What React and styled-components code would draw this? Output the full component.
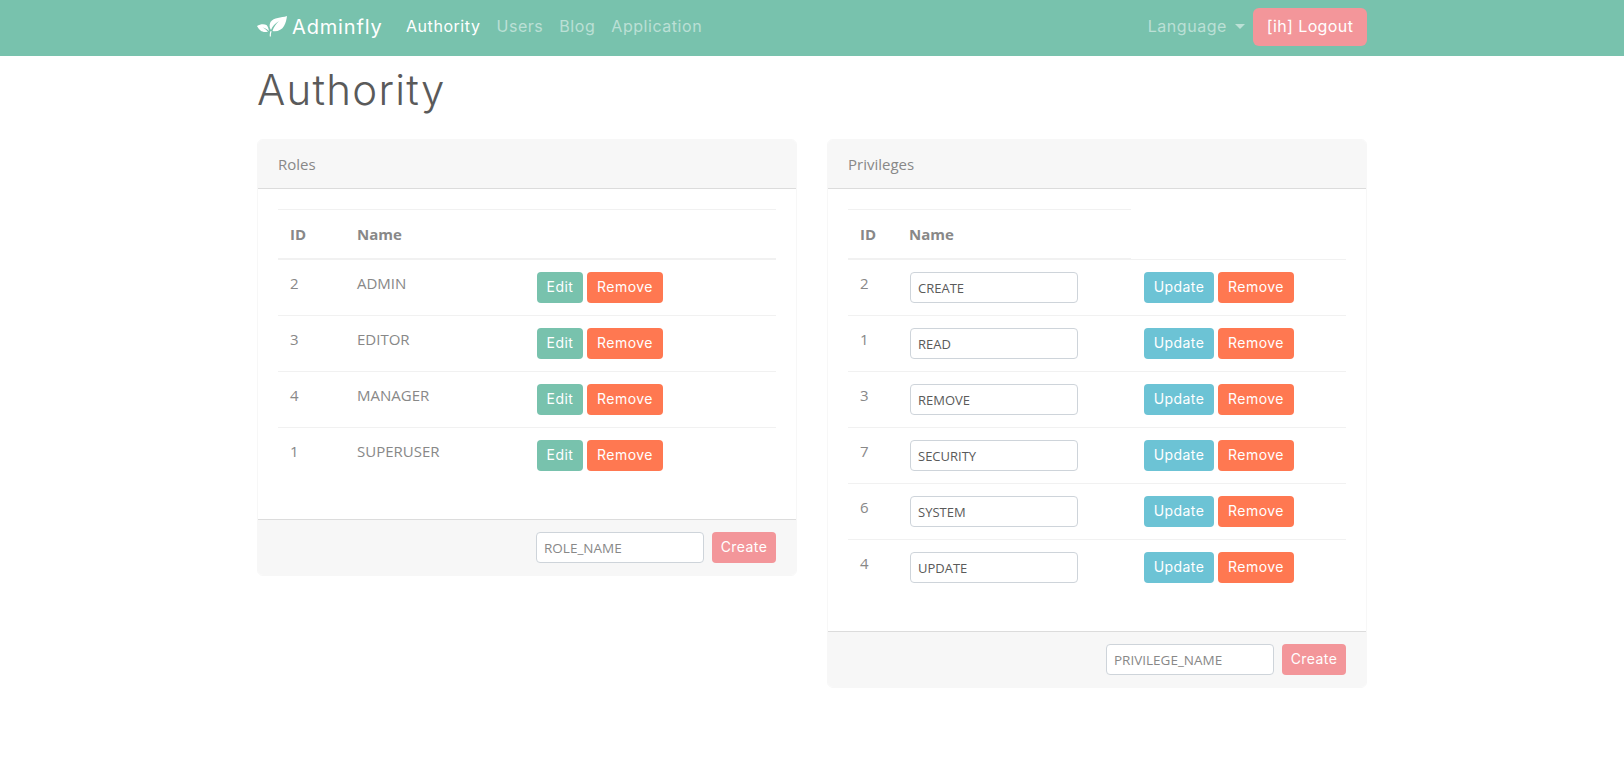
import React from "react";
import styled, { createGlobalStyle } from "styled-components";

const Global = createGlobalStyle`
  * { box-sizing: border-box; }
  html, body { margin: 0; background: #fff; }
  body { font-family: "Open Sans", "Noto Sans", sans-serif; font-size: 15px; line-height: 21px; color: #888; }
`;
const heading = `"Inter", "Liberation Sans", sans-serif`;

const Navbar = styled.nav`height: 56px; background: #78c2ad;`;
const Container = styled.div`width: 1110px; margin: 0 auto;`;
const NavInner = styled(Container)`display: flex; align-items: center; height: 100%; padding-bottom: 3px;`;
const Brand = styled.a`display: flex; align-items: center; gap: 5px; width: 149px; color: #fff; font: 400 20px/30px ${heading}; letter-spacing: .85px;`;
const NavLink = styled.a`
  font: 400 16px/22px ${heading}; letter-spacing: .55px; padding-bottom: 2px;
  color: ${p => (p.$active ? "#fff" : "rgba(255,255,255,.5)")};
  margin-right: ${p => (p.$last ? 0 : 16)}px;
`;
const Spacer = styled.div`flex: 1;`;
const Caret = styled.span`
  display: inline-block; margin-left: 8px; vertical-align: 3px;
  border-top: 5px solid currentColor; border-left: 5px solid transparent; border-right: 5px solid transparent;
`;
const LogoutButton = styled.button`
  height: 38px; width: 114px; border: 0; border-radius: 6px; background: #f3969a; color: #fff;
  font: 400 16px/24px ${heading}; letter-spacing: .4px; padding: 0 0 2px; margin-left: 8px;
`;
const Title = styled.h1`font: 300 42px/50px ${heading}; letter-spacing: 1.25px; color: #5a5a5a; margin: 9px 0 24px; `;
const Columns = styled.div`display: grid; grid-template-columns: 540px 540px; gap: 30px; align-items: start;`;
const Card = styled.section`border: 1px solid #f7f7f7; border-radius: 6px; background: #fff; overflow: hidden;`;
const CardHeader = styled.header`height: 49px; padding: 14px 20px; background: #f7f7f7; border-bottom: 1px solid #dcdcdc;`;
const CardBody = styled.div`padding: 20px;`;
const CardFooter = styled.footer`
  height: 56px; background: #f7f7f7; border-top: 1px solid #dcdcdc; padding: 12px 20px;
  display: flex; justify-content: flex-end; gap: 8px;
`;
const Table = styled.div`margin-bottom: 15px;`;
const HeadRow = styled.div`
  display: grid; grid-template-columns: ${p => p.$cols}; width: ${p => p.$width || "100%"};
  height: 51px; padding: 14px 0 0 12px;
  border-top: 1px solid #f1f1f1; border-bottom: 2px solid #f1f1f1;
  font-weight: 700;
`;
const Row = styled.div`
  display: grid; grid-template-columns: ${p => p.$cols}; height: 56px; padding: 12px 0 0 12px;
  border-bottom: 1px solid #f1f1f1;
  box-shadow: 0 -1px 0 #f1f1f1;
  &:last-child { border-bottom: 0; }
`;
const Cell = styled.div`margin-top: 1px;`;
const Actions = styled.div`display: flex; gap: 4px;`;
const Button = styled.button`
  height: 31px; padding: 0 0 2px; border: 0; border-radius: 4px; width: ${p => p.$w}px;
  background: ${p => p.$bg}; color: #fff; font: 400 14px/21px ${heading}; letter-spacing: .45px;
`;
const Input = styled.input`
  width: 168px; height: 31px; padding: 0 7px; border: 1px solid #ced4da; border-radius: 4px;
  background: #fff; color: #5a5a5a; font: 400 13px/20px "Open Sans", sans-serif; outline: 0;
  &::placeholder { color: #888; opacity: 1; font-size: 13.5px; }
`;

const Leaf = () => (
  <svg width="30" height="21" viewBox="0 0 30 21" fill="#fff" aria-hidden="true">
    <path d="M30 0C24 2 17 1 13.500 6 12 9 12.500 12 14 14 15.500 10 18 7.500 22 5 19 8 16.500 11 15.500 15 20 16 25 14 27 10 29 7 29.500 3 30 0z" />
    <path d="M0 10C3 8 7 7.500 9.500 9 11 10.500 11.500 12.500 12 15 10 13 8 12 5.500 11.500 7.500 12.500 9.500 14 11 15.500 8 16.500 5.500 16 3.500 14.500 2 13.500 1 11.500 0 10z" />
    <path d="M12.800 20.500c-.2-1.800 0-3.800.8-5.500l1 .3c-.7 1.800-.9 3.500-.7 5.300z" />
  </svg>
);

const green = "#78c2ad", red = "#ff7851", blue = "#6cc3d5", pink = "#f3969a";
const roles = [["2", "ADMIN"], ["3", "EDITOR"], ["4", "MANAGER"], ["1", "SUPERUSER"]];
const privs = [["2", "CREATE"], ["1", "READ"], ["3", "REMOVE"], ["7", "SECURITY"], ["6", "SYSTEM"], ["4", "UPDATE"]];
const roleCols = "67px 180px 1fr";
const privHead = "49px 1fr";
const privCols = "50px 234px 1fr";

export default function App() {
  return (
    <>
      <Global />
      <Navbar>
        <NavInner>
          <Brand><Leaf />Adminfly</Brand>
          <NavLink $active>Authority</NavLink>
          <NavLink>Users</NavLink>
          <NavLink>Blog</NavLink>
          <NavLink>Application</NavLink>
          <Spacer />
          <NavLink $last>Language<Caret /></NavLink>
          <LogoutButton>[ih] Logout</LogoutButton>
        </NavInner>
      </Navbar>
      <Container>
        <Title>Authority</Title>
        <Columns>
          <Card>
            <CardHeader>Roles</CardHeader>
            <CardBody>
              <Table>
                <HeadRow $cols={roleCols}><div>ID</div><div>Name</div></HeadRow>
                {roles.map(([id, name]) => (
                  <Row key={id} $cols={roleCols}>
                    <Cell>{id}</Cell>
                    <Cell>{name}</Cell>
                    <Actions><Button $w={46} $bg={green}>Edit</Button><Button $w={76} $bg={red}>Remove</Button></Actions>
                  </Row>
                ))}
              </Table>
            </CardBody>
            <CardFooter><Input placeholder="ROLE_NAME" /><Button $w={64} $bg={pink}>Create</Button></CardFooter>
          </Card>
          <Card>
            <CardHeader>Privileges</CardHeader>
            <CardBody>
              <Table>
                <HeadRow $cols={privHead} $width="283px"><div>ID</div><div>Name</div></HeadRow>
                {privs.map(([id, name]) => (
                  <Row key={id} $cols={privCols}>
                    <Cell>{id}</Cell>
                    <Input defaultValue={name} />
                    <Actions><Button $w={70} $bg={blue}>Update</Button><Button $w={76} $bg={red}>Remove</Button></Actions>
                  </Row>
                ))}
              </Table>
            </CardBody>
            <CardFooter><Input placeholder="PRIVILEGE_NAME" /><Button $w={64} $bg={pink}>Create</Button></CardFooter>
          </Card>
        </Columns>
      </Container>
    </>
  );
}
